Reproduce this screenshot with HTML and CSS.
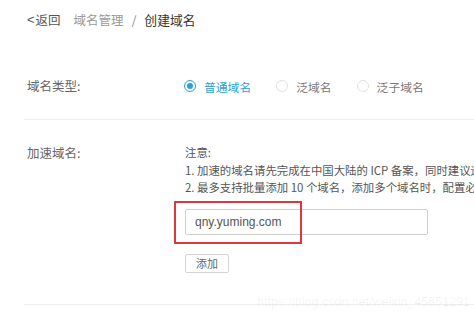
FILE: index.html
```html
<!DOCTYPE html>
<html lang="zh-CN">
<head>
<meta charset="utf-8">
<title>创建域名</title>
<link rel="stylesheet" href="styles.css">
</head>
<body>
<div class="page">
  <div class="breadcrumb">
    <span class="back"><span class="chev">&lt;</span>返回</span>
    <span class="crumb">域名管理</span>
    <span class="sep">/</span>
    <span class="current">创建域名</span>
  </div>

  <div class="section section-type">
    <div class="row">
      <div class="label">域名类型:</div>
      <div class="content radios">
        <label class="radio checked"><span class="dot"></span><span class="rtext">普通域名</span></label>
        <label class="radio"><span class="dot"></span><span class="rtext">泛域名</span></label>
        <label class="radio"><span class="dot"></span><span class="rtext">泛子域名</span></label>
      </div>
    </div>
  </div>

  <div class="section section-domain">
    <div class="row top">
      <div class="label">加速域名:</div>
      <div class="content">
        <div class="notes">
          <div>注意:</div>
          <div>1. 加速的域名请先完成在中国大陆的 ICP 备案，同时建议运营商</div>
          <div>2. 最多支持批量添加 10 个域名，添加多个域名时，配置必须一致</div>
        </div>
        <div class="input-wrap">
          <div class="input">qny.yuming.com</div>
          <div class="highlight"></div>
        </div>
        <div class="btn">添加</div>
      </div>
    </div>
  </div>
  <div class="watermark">https://blog.csdn.net/weixin_45651291</div>
</div>
</body>
</html>
```
FILE: styles.css
```css
html, body {
  margin: 0;
  padding: 0;
  background: #fff;
  overflow: hidden;
}
body {
  font-family: "Noto Sans CJK SC", "Noto Sans", sans-serif;
  color: #666;
}
.page {
  position: relative;
  width: 474px;
  height: 315px;
  padding-left: 24px;
  box-sizing: border-box;
  overflow: hidden;
}
.breadcrumb {
  height: 38px;
  display: flex;
  align-items: center;
  padding-left: 3px;
  font-size: 12.5px;
}
.back {
  color: #555;
  display: flex;
  align-items: center;
}
.chev {
  font-family: "Liberation Sans", sans-serif;
  font-size: 13px;
  margin-right: 1px;
}
.crumb {
  color: #9a9a9a;
  margin-left: 13px;
}
.sep {
  color: #888;
  margin: 0 8px;
  font-size: 12px;
}
.current {
  color: #333;
  font-size: 12.8px;
}
.section {
  border-bottom: 1px solid #eeeeee;
}
.section-type {
  padding-top: 36px;
  padding-bottom: 21px;
}
.section-domain {
  padding-top: 24px;
  padding-bottom: 31px;
}
.row {
  display: flex;
  align-items: center;
  height: 24px;
}
.row.top {
  align-items: flex-start;
  height: auto;
}
.label {
  width: 158px;
  padding-left: 3px;
  flex: none;
  font-size: 12.5px;
  color: #666;
  line-height: 17.5px;
}
.content {
  flex: 1;
  min-width: 0;
}
.radios {
  display: flex;
  align-items: center;
  margin-left: -1px;
}
.radio {
  display: flex;
  align-items: center;
  margin-right: 25px;
  font-size: 11.8px;
  color: #777;
}
.dot {
  width: 12px;
  height: 12px;
  box-sizing: border-box;
  border: 1px solid #e2e2e2;
  border-radius: 50%;
  margin-right: 8px;
  position: relative;
}
.radio.checked .dot {
  border-color: #2a9fdc;
}
.radio.checked .dot::after {
  content: "";
  position: absolute;
  left: 2px;
  top: 2px;
  width: 6px;
  height: 6px;
  border-radius: 50%;
  background: #2a9fdc;
}
.radio.checked .rtext {
  color: #2a9fdc;
}
.notes {
  font-size: 11.4px;
  line-height: 17.5px;
  color: #555;
  white-space: nowrap;
  overflow: hidden;
}
.input-wrap {
  position: relative;
  margin-top: 12px;
  width: 243px;
}
.input {
  height: 26px;
  box-sizing: border-box;
  border: 1px solid #cfcfcf;
  border-radius: 2px;
  padding-left: 9px;
  font-family: "Liberation Sans", sans-serif;
  font-size: 12px;
  line-height: 24px;
  color: #555;
}
.highlight {
  position: absolute;
  left: -11px;
  top: -8px;
  width: 128px;
  height: 43px;
  box-sizing: border-box;
  border: 2px solid #e2353d;
}
.btn {
  margin-top: 19px;
  width: 44px;
  height: 19px;
  box-sizing: border-box;
  border: 1px solid #d4d4d4;
  border-radius: 2px;
  font-size: 11px;
  line-height: 17px;
  text-align: center;
  color: #666;
}
.watermark {
  position: absolute;
  right: 4px;
  top: 295px;
  font-family: "Liberation Sans", sans-serif;
  font-size: 12.5px;
  color: rgba(0, 0, 0, 0.06);
}
```
